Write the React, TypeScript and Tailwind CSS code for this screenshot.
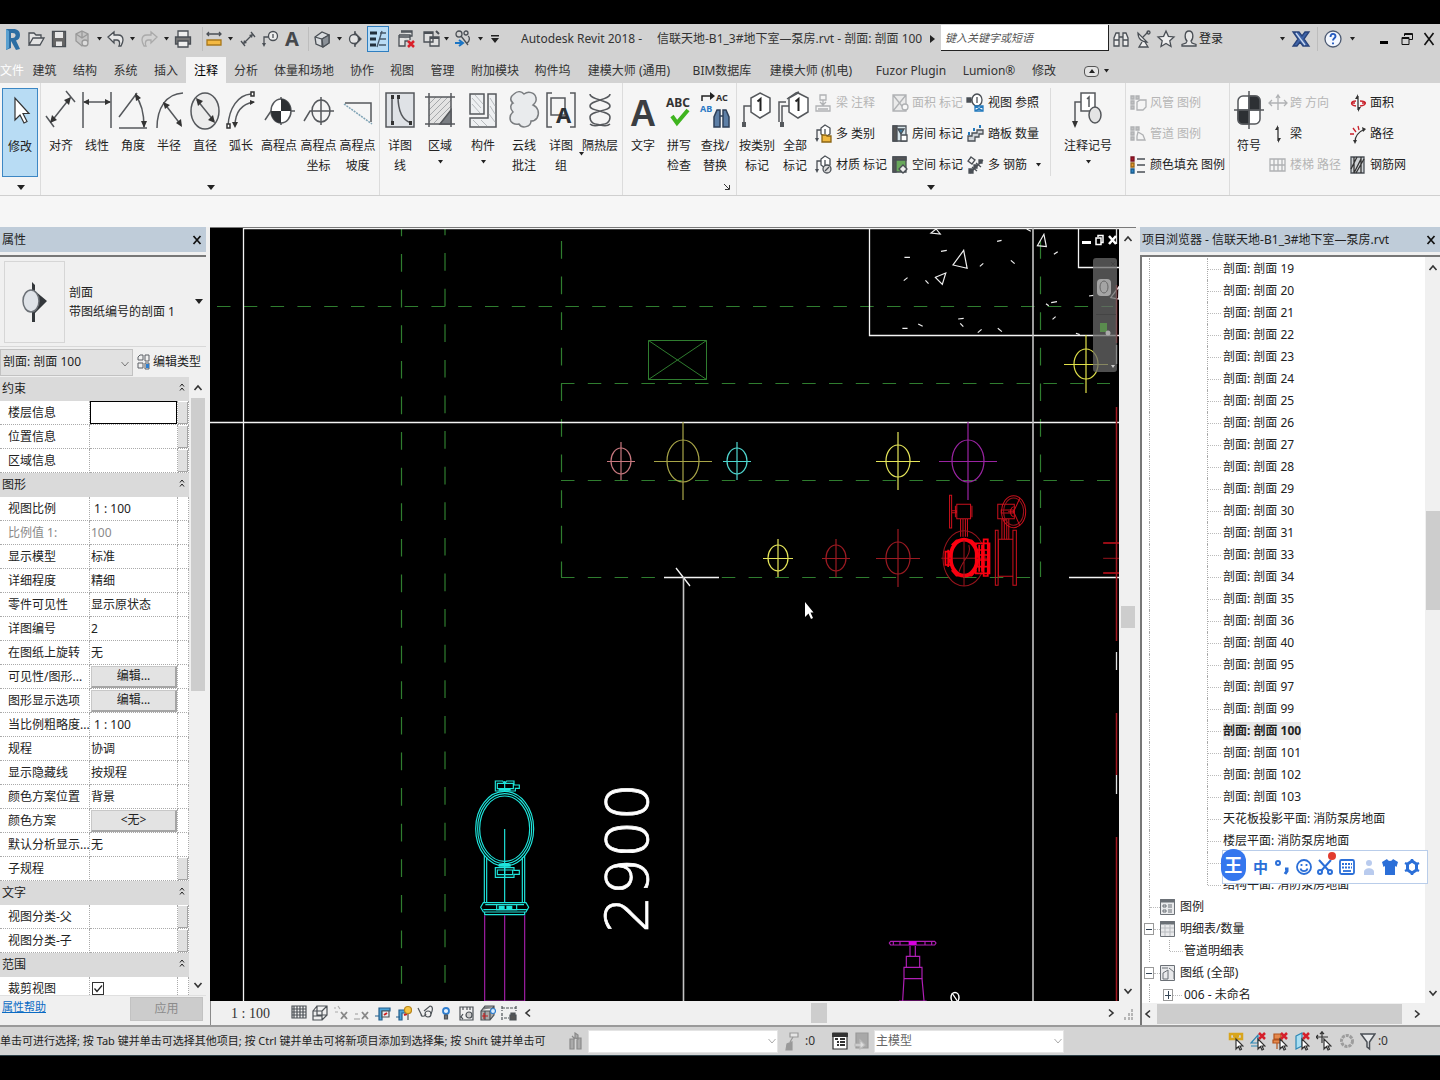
import React from 'react';

type Kids = { children: React.ReactNode };

const FONT = "font-['Noto_Sans','Noto_Sans_CJK_SC',sans-serif]";

/* ---------- icon helpers ---------- */

function Big({ children }: Kids) {
  return (
    <svg viewBox="0 0 36 40" className="h-10 w-9 shrink-0 overflow-visible" fill="none" stroke="#55585c" strokeWidth="1.5" aria-hidden="true">
      {children}
    </svg>
  );
}

function Sm({ children }: Kids) {
  return (
    <svg viewBox="0 0 20 20" className="h-5 w-5 shrink-0" fill="none" stroke="#4a4f55" strokeWidth="1.3" aria-hidden="true">
      {children}
    </svg>
  );
}

function Down({ className = '' }: { className?: string }) {
  return (
    <svg viewBox="0 0 8 5" className={`h-[5px] w-2 shrink-0 ${className}`} aria-hidden="true">
      <path d="M0 0h8L4 5z" fill="#222" />
    </svg>
  );
}

function Tiny() {
  return (
    <svg viewBox="0 0 6 4" className="h-1 w-1.5 shrink-0" aria-hidden="true">
      <path d="M1 0h5L3.500 3.500z" fill="#222" />
    </svg>
  );
}

function Chevron({ dir }: { dir: 'up' | 'down' | 'left' | 'right' }) {
  const d = {
    up: 'M1.500 7L5 3l3.500 4',
    down: 'M1.500 3L5 7l3.500-4',
    left: 'M7 1.500L3 5l4 3.500',
    right: 'M3 1.500L7 5l-4 3.500',
  }[dir];
  return (
    <svg viewBox="0 0 10 10" className="h-2.5 w-2.5 shrink-0" fill="none" stroke="#333" strokeWidth="1.6" aria-hidden="true">
      <path d={d} />
    </svg>
  );
}

/* ---------- title bar ---------- */

function Tool({ w, label, active, children }: Kids & { w: string; label: string; active?: boolean }) {
  return (
    <button
      type="button"
      aria-label={label}
      className={`flex h-[26px] shrink-0 items-center justify-center ${w} ${active ? 'border border-[#2f7ec0] bg-[#b9dcf5]' : ''}`}
    >
      {children}
    </button>
  );
}

function Sep() {
  return <span className="h-6 w-px shrink-0 bg-[#bdbdbd]" />;
}

function TitleBar() {
  return (
    <div className="flex h-[29px] items-center bg-[#d2d2d2]">
      <Tool w="w-[23px]" label="应用程序菜单">
        <svg viewBox="0 0 20 24" className="h-6 w-5" aria-hidden="true">
          <path d="M4 2h7c5 0 7 2.500 7 6 0 3-1.500 5-4 5.500L18 22l-4 1-5-9v7l-5 2z" fill="#2c6ea3" />
          <path d="M9 6h1.500c2 0 3 .8 3 2.200S12.500 11 10.500 11H9z" fill="#d2d2d2" />
          <path d="M4 2l3 2v17l-3 2z" fill="#5aa0d0" />
        </svg>
      </Tool>
      <Tool w="w-[25px]" label="打开">
        <Sm>
          <path d="M3 16V4h5l2 2h5v3M3 16l4-7h11l-4 7z" fill="#e4e4e4" />
        </Sm>
      </Tool>
      <Tool w="w-[22px]" label="保存">
        <Sm>
          <path d="M3.500 2.500h13v15h-13z" fill="#666" />
          <path d="M6 3h8v6H6zM7 12.500h6V17H7z" fill="#e8e8e8" stroke="none" />
        </Sm>
      </Tool>
      <Tool w="w-[24px]" label="同步">
        <Sm>
          <g stroke="#999">
            <path d="M10 2l6 3v7l-6 5-6-5V5z" fill="#c4c4c4" />
            <path d="M10 2v7M4 5l6 4 6-4" />
            <circle cx="13" cy="14" r="3" fill="#ddd" />
          </g>
        </Sm>
      </Tool>
      <Tool w="w-[10px]" label="同步选项"><Tiny /></Tool>
      <Tool w="w-[23px]" label="放弃">
        <Sm>
          <path d="M2 8l6-5v3h4c4 0 5 3 5 5s-1 4-2 6h-2c1-2 1-6-2-6H8v3z" fill="#e8e8e8" />
        </Sm>
      </Tool>
      <Tool w="w-[10px]" label="放弃列表"><Tiny /></Tool>
      <Tool w="w-[23px]" label="重做">
        <Sm>
          <path stroke="#aaa" d="M18 8l-6-5v3H8c-4 0-5 3-5 5s1 4 2 6h2c-1-2-1-6 2-6h3v3z" />
        </Sm>
      </Tool>
      <Tool w="w-[11px]" label="重做列表"><Tiny /></Tool>
      <Tool w="w-[24px]" label="打印">
        <Sm>
          <path d="M5 8V2h10v6" fill="#eee" />
          <path d="M2.500 8h15v7h-15z" fill="#777" />
          <path d="M5 12h10v6H5z" fill="#eee" />
        </Sm>
      </Tool>
      <div className="w-[7px] shrink-0" />
      <Sep />
      <Tool w="w-[21px]" label="测量">
        <Sm>
          <path d="M3 5h14M5 3L3 5l2 2M15 3l2 2-2 2" />
          <path d="M3 11h14v5H3z" fill="#f4b942" stroke="#a9781b" />
        </Sm>
      </Tool>
      <Tool w="w-[12px]" label="测量选项"><Tiny /></Tool>
      <Tool w="w-[23px]" label="对齐尺寸标注">
        <Sm>
          <path d="M6 14L14 6M3 12l4 5M13 3l4 5" />
          <path d="M5 15l1-4 3 3zM15 5l-4 1 3 3z" fill="#4a4f55" stroke="none" />
        </Sm>
      </Tool>
      <Tool w="w-[22px]" label="按类别标记">
        <Sm>
          <circle cx="13" cy="7" r="4.500" fill="#eee" />
          <path d="M8.500 8H4v8M13 5v4" />
          <path d="M2 14h4l-2 4z" fill="#4a4f55" stroke="none" />
        </Sm>
      </Tool>
      <Tool w="w-[22px]" label="文字">
        <span className="text-[20px] leading-6 font-bold text-[#45484c]" aria-hidden="true">A</span>
      </Tool>
      <div className="w-[5px] shrink-0" />
      <Sep />
      <Tool w="w-[26px]" label="默认三维视图">
        <Sm>
          <path d="M3 8l7-5 7 3v8l-6 4-7-3z" fill="#d9dcdf" />
          <path d="M3 8l7 2 7-4M10 10v8" />
          <path d="M10 10l7-4v8l-6 4z" fill="#8a9097" />
        </Sm>
      </Tool>
      <Tool w="w-[8px]" label="三维选项"><Tiny /></Tool>
      <Tool w="w-[24px]" label="剖面">
        <Sm>
          <path d="M10 2v16" />
          <path d="M10 4l6 6-6 6z" fill="#333" />
          <circle cx="9" cy="10" r="4.500" fill="#e4e4e4" />
        </Sm>
      </Tool>
      <Tool w="w-[22px]" label="细线" active>
        <Sm>
          <path d="M2 4h7M2 10h6M2 16h6" strokeWidth="3" stroke="#22303d" />
          <path d="M12 4h6M11 10h7M11 16h7M14 2L9 18" stroke="#46586a" />
        </Sm>
      </Tool>
      <Tool w="w-[34px]" label="关闭隐藏窗口">
        <Sm>
          <path d="M5 2h11v5h-2M3 6h11v5M3 6v11h6v-5h3" fill="#e4e4e4" />
          <path d="M3 8h11M5 3h11" />
          <path d="M12 12l6 6M18 12l-6 6" stroke="#d9202a" strokeWidth="2.500" />
        </Sm>
      </Tool>
      <Tool w="w-[18px]" label="切换窗口">
        <Sm>
          <path d="M2 3h9v10H2zM8 8h9v9H8z" fill="#e0e0e0" />
          <path d="M2 4h9M8 9h9M14 2l3 3" strokeWidth="2" />
        </Sm>
      </Tool>
      <Tool w="w-[10px]" label="切换窗口列表"><Tiny /></Tool>
      <Tool w="w-[24px]" label="用户界面">
        <Sm>
          <circle cx="6" cy="5" r="3" />
          <circle cx="13" cy="4" r="2" />
          <path d="M8 7l7 9M15 7c2 1 2 5-1 7" />
          <path d="M2 14h7M6 11l4 3-4 3" stroke="#1b75c4" strokeWidth="2" />
        </Sm>
      </Tool>
      <Tool w="w-[10px]" label="用户界面列表"><Tiny /></Tool>
      <Tool w="w-[20px]" label="自定义快速访问工具栏">
        <svg viewBox="0 0 8 8" className="h-2 w-2" aria-hidden="true">
          <path d="M0 0h8v1.500H0zM0 3h8L4 8z" fill="#222" />
        </svg>
      </Tool>
      <div className="flex min-w-0 flex-1 items-center overflow-hidden pl-4 text-[12px] whitespace-nowrap text-[#333]">
        <span className="w-[136px] shrink-0">Autodesk Revit 2018 -</span>
        <span className="truncate">信联天地-B1_3#地下室—泵房.rvt - 剖面: 剖面 100</span>
      </div>
      <svg viewBox="0 0 5 8" className="mr-1.5 ml-0.5 h-2 w-[5px] shrink-0" aria-hidden="true">
        <path d="M0 0l5 4-5 4z" fill="#222" />
      </svg>
      <input
        aria-label="搜索"
        placeholder="键入关键字或短语"
        className="mb-0.5 h-[26px] w-[168px] shrink-0 border-r border-b border-[#222] bg-white px-1 text-[11px] italic placeholder:text-[#555]"
      />
      <Tool w="w-[23px]" label="搜索">
        <Sm>
          <path d="M3 17V9l2-5h3v13zM12 17V4h3l2 5v8zM8 8h4M3 11h5M12 11h5" fill="#ececec" />
        </Sm>
      </Tool>
      <Tool w="w-[23px]" label="通讯中心">
        <Sm>
          <path d="M4 4c0 6 4 9 9 9zM9 8l5-5M8 13l-3 5h9l-3-5" fill="#eee" />
          <circle cx="14.500" cy="3.500" r="1.500" />
        </Sm>
      </Tool>
      <Tool w="w-[22px]" label="收藏夹">
        <Sm>
          <path d="M10 2l2.400 5.300 5.600.6-4.200 3.900 1.200 5.700-5-3-5 3 1.200-5.700L2 7.900l5.600-.6z" fill="#eee" />
        </Sm>
      </Tool>
      <button type="button" className="flex w-[98px] shrink-0 items-center pl-0.5 text-[12px]">
        <Sm>
          <path d="M10 2c-5 0-4.500 8-2 10l-1 2-4 1.500V17h14v-1.500L13 14l-1-2c2.500-2 3-10-2-10z" fill="#e6e6e6" />
        </Sm>
        登录
      </button>
      <Tool w="w-[14px]" label="登录选项"><Tiny /></Tool>
      <Tool w="w-[24px]" label="Exchange Apps">
        <Sm>
          <path d="M2 3h6l3 4 3-4h4l-5 7 5 7h-6l-3-4-3 4H2l5-7z" fill="#3f64a8" stroke="#28437a" />
          <path d="M5 4l9 12" stroke="#c9d8f0" />
        </Sm>
      </Tool>
      <div className="w-1 shrink-0" />
      <Sep />
      <Tool w="w-[30px]" label="帮助">
        <Sm>
          <circle cx="10" cy="10" r="8" fill="#f4f8ff" stroke="#4c5a72" />
          <path d="M7.500 8c0-4 5-4 5-.8 0 2-2.500 2-2.500 4.300M10 13.500v1.800" stroke="#245ac0" strokeWidth="1.900" />
        </Sm>
      </Tool>
      <Tool w="w-[8px]" label="帮助选项"><Tiny /></Tool>
      <div className="w-4 shrink-0" />
      <Tool w="w-[24px]" label="最小化">
        <span className="mt-2 h-[3px] w-2 bg-black" />
      </Tool>
      <Tool w="w-[22px]" label="还原">
        <svg viewBox="0 0 12 14" className="h-3.5 w-3" fill="none" stroke="#111" aria-hidden="true">
          <path d="M3.500 4V1.500h8v6H8M1 5.500h7v7H1zM1 6.500h7M4 2.500h7" />
        </svg>
      </Tool>
      <Tool w="w-[22px]" label="关闭">
        <svg viewBox="0 0 12 14" className="h-3.5 w-3" fill="none" stroke="#111" strokeWidth="1.6" aria-hidden="true">
          <path d="M1.500 1l9 12M10.500 1l-9 12" />
        </svg>
      </Tool>
    </div>
  );
}

/* ---------- ribbon tabs ---------- */

const tabs: [string, string][] = [
  ['文件', 'w-6'],
  ['建筑', 'w-[41px]'],
  ['结构', 'w-10'],
  ['系统', 'w-[41px]'],
  ['插入', 'w-10'],
  ['注释', 'w-10'],
  ['分析', 'w-10'],
  ['体量和场地', 'w-[76px]'],
  ['协作', 'w-10'],
  ['视图', 'w-10'],
  ['管理', 'w-[41px]'],
  ['附加模块', 'w-16'],
  ['构件坞', 'w-[51px]'],
  ['建模大师 (通用)', 'w-[102px]'],
  ['BIM数据库', 'w-[84px]'],
  ['建模大师 (机电)', 'w-[94px]'],
  ['Fuzor Plugin', 'w-[106px]'],
  ['Lumion®', 'w-[50px]'],
  ['修改', 'w-[60px]'],
];

function Tabs() {
  return (
    <nav className="flex h-[30px] items-end bg-[#d2d2d2] text-[12px]">
      {tabs.map(([t, w], i) => (
        <button
          type="button"
          key={t}
          className={`flex h-[26px] shrink-0 items-center justify-center pt-0.5 whitespace-nowrap ${w} ${
            i === 0 ? 'text-white' : t === '注释' ? 'bg-[#f5f5f5] text-black' : 'text-[#333]'
          }`}
        >
          {t}
        </button>
      ))}
      <button type="button" aria-label="最小化功能区" className="ml-2.5 flex h-[26px] items-center gap-1 pt-0.5">
        <span className="flex h-[11px] w-[15px] items-center justify-center rounded-sm border border-[#555] bg-[#e4e4e4]">
          <svg viewBox="0 0 6 4" className="h-1 w-1.5" aria-hidden="true"><path d="M0 4h6L3 0z" fill="#222" /></svg>
        </span>
        <Tiny />
      </button>
    </nav>
  );
}

/* ---------- ribbon ---------- */

function Btn({ w, lines, icon, arrow, side }: { w: string; lines: string[]; icon: React.ReactNode; arrow?: boolean; side?: boolean }) {
  return (
    <button type="button" className={`relative flex h-[88px] shrink-0 flex-col items-center pt-0.5 text-[12px] leading-5 whitespace-nowrap text-[#222] ${w}`}>
      {icon}
      <span className="mt-1.5">{lines[0]}</span>
      {lines[1] ? <span>{lines[1]}</span> : null}
      {arrow ? <span className="mt-1"><Tiny /></span> : null}
      {side ? <span className="absolute top-16 -right-1 flex"><Tiny /></span> : null}
    </button>
  );
}

function Row({ icon, text, off, arrow }: { icon: React.ReactNode; text: string; off?: boolean; arrow?: boolean }) {
  return (
    <button type="button" disabled={off} className={`flex h-[31px] items-center gap-0.5 text-[12px] whitespace-nowrap ${off ? 'text-[#b5b5b5]' : 'text-[#222]'}`}>
      <span className={`flex ${off ? 'opacity-40' : ''}`}>{icon}</span>
      <span>{text}</span>
      {arrow ? <span className="ml-1.5"><Tiny /></span> : null}
    </button>
  );
}

function Group({ w, foot, launcher, children, last, pad = '' }: Kids & { w: string; foot?: boolean; launcher?: boolean; last?: boolean; pad?: string }) {
  return (
    <section className={`flex shrink-0 flex-col pt-[5px] ${w} ${pad} ${last ? '' : 'border-r border-[#dcdcdc]'}`}>
      <div className="flex h-[93px]">{children}</div>
      <div className="flex h-3 items-center justify-center">
        {foot ? <Down /> : null}
        {launcher ? (
          <svg viewBox="0 0 6 6" className="mr-1.5 ml-auto h-1.5 w-1.5" fill="none" stroke="#333" aria-hidden="true">
            <path d="M0 0l5 5M5.500 1v4.500H1" />
          </svg>
        ) : null}
      </div>
    </section>
  );
}

const tagHex = (
  <>
    <path d="M21 3l10 5v14l-10 6-9-6V8z" fill="#fff" />
    <path d="M12 16H5v19" />
    <path d="M3 32h4v5H3z" fill="#55585c" stroke="none" />
    <path d="M18.500 11.500l3-2.500v12" stroke="#222" strokeWidth="2" />
  </>
);

const ic = {
  modify: (
    <Big>
      <path d="M13 7v22l5-5 4 8 3-1.500-4-8h6z" fill="#fff" stroke="#333" strokeWidth="1.200" />
    </Big>
  ),
  aligned: (
    <Big>
      <path d="M8 32L27 8M3 26l8 11M23 1l9 11" />
      <path d="M7 33l2-8 5 5zM28 7l-7 3 5 5z" fill="#333" stroke="none" />
    </Big>
  ),
  linear: (
    <Big>
      <path d="M4 2v36M32 2v36M5 12h26" />
      <path d="M4 12l6-3v6zM32 12l-6-3v6z" fill="#333" stroke="none" />
    </Big>
  ),
  angular: (
    <Big>
      <path d="M4 27L22 3M4 38h28M20 5c6 7 9 20 9 32" />
      <path d="M20 3l6 5-5 3zM29 38l-3-7h6z" fill="#333" stroke="none" />
    </Big>
  ),
  radius: (
    <Big>
      <path d="M6 38C6 18 15 4 32 3M13 13l17 22" />
      <path d="M12 12l7 3-5 4zM31 37l-6-4 5-4z" fill="#333" stroke="none" />
    </Big>
  ),
  diameter: (
    <Big>
      <ellipse cx="18" cy="21" rx="14" ry="18" fill="#ececec" />
      <path d="M10 10l17 21" />
      <path d="M9 8l7 3-5 5zM28 33l-7-3 5-5z" fill="#333" stroke="none" />
    </Big>
  ),
  arc: (
    <Big>
      <path d="M5 36C6 18 15 5 28 4M12 36c0-14 7-22 19-24" />
      <path d="M4 34h3v4H4zM28 2h3v4h-3z" fill="#fff" stroke="#333" />
      <path d="M12 38l-3-6h6zM32 12l-5-2v5z" fill="#333" stroke="none" />
    </Big>
  ),
  spot: (
    <Big>
      <path d="M4 30l6-9h24M20 7v28" />
      <ellipse cx="20" cy="21" rx="10" ry="12" fill="#fff" />
      <path d="M20 9a10 12 0 0 0-10 12h10zM20 33a10 12 0 0 0 10-12H20z" fill="#2d3034" stroke="none" transform="matrix(-1 0 0 1 40 0)" />
    </Big>
  ),
  spotCoord: (
    <Big>
      <ellipse cx="20" cy="21" rx="9" ry="11" />
      <path d="M3 31l6-10h24M20 7v28" />
    </Big>
  ),
  slope: (
    <Big>
      <path d="M5 13h26v19" />
      <path d="M4 14l28 20" stroke="#7fa3b5" strokeDasharray="2 1" />
    </Big>
  ),
  detailLine: (
    <Big>
      <path d="M4 3h28v34H4z" fill="#dfe2e6" />
      <path d="M10 6v28M16 6c0 14 4 24 13 27" />
      <path d="M9 5h3v4H9zM9 31h3v4H9zM15 5h3v4h-3zM27 31h3v4h-3z" fill="#333" stroke="none" />
    </Big>
  ),
  region: (
    <Big>
      <path d="M7 7h22v26H7z" fill="#e3e3e3" stroke="none" />
      <path d="M7 14l7-7M7 20L20 7M7 26L26 7M7 32L29 10M12 33l17-17M18 33l11-11M24 33l5-5" stroke="#a5a8ab" strokeWidth="1" />
      <path d="M3 7h30M3 34h30M7 3v34M29 3v34" />
      <path d="M18 34l11-14v14z" fill="#7b7f84" />
    </Big>
  ),
  component: (
    <Big>
      <path d="M5 4h14v20H5zM23 4h8v33H5V28h18z" fill="#eef0f2" />
      <path d="M7 8l9 10M7 14l8 9M10 5l8 9M25 8l5 8M25 16l5 8M24 24l6 8M8 30l6 6M16 30l6 6" stroke="#b6babd" strokeWidth="1" />
    </Big>
  ),
  cloud: (
    <Big>
      <path d="M8 4c4-4 8-2 10 0 4-3 11-2 12 4 1 4-2 6-3 7 5 2 7 8 4 13-2 3-5 3-6 3 0 6-9 8-12 3-4 1-9-1-9-6 0-4 2-5 3-6-4-4-2-8 0-9C3 10 5 6 8 4z" fill="#e9ebed" stroke="#7a7d80" />
    </Big>
  ),
  detailGroup: (
    <Big>
      <path d="M9 3H4v34h5M27 3h5v34h-5M8 8h14v17H8z" />
      <text x="13" y="33" fontSize="22" fontWeight="700" fill="#2d3034" stroke="none">A</text>
    </Big>
  ),
  insulation: (
    <Big>
      <path d="M8 4c0 6 20 6 20 12S8 20 8 27s6 7 10 8c4 1 8 1 10-1M28 4c0 6-20 6-20 12s20 4 20 11-6 7-10 8c-4 1-8 1-10-1" />
    </Big>
  ),
  text: (
    <Big>
      <text x="5" y="36" fontSize="36" fontWeight="700" fill="#3b3e42" stroke="none" fontFamily="Liberation Sans Narrow, Liberation Sans, sans-serif">A</text>
    </Big>
  ),
  spell: (
    <Big>
      <text x="5" y="17" fontSize="12" fontWeight="700" fill="#333" stroke="none">ABC</text>
      <path d="M11 26l5 7 11-13" stroke="#3fb41f" strokeWidth="4" />
    </Big>
  ),
  find: (
    <Big>
      <path d="M5 11V6h10" stroke="#222" />
      <path d="M13 2l5 4-5 4z" fill="#222" stroke="none" />
      <text x="19" y="11" fontSize="9" fontWeight="700" fill="#333" stroke="none">AC</text>
      <text x="3" y="22" fontSize="9" fontWeight="700" fill="#2a7ac6" stroke="none">AB</text>
      <path d="M17 37V27l3-7h3v17zM26 37V20h3l3 7v10zM23 26h3" fill="#5d7fa6" stroke="#2e4059" />
    </Big>
  ),
  tag: <Big>{tagHex}</Big>,
  tagAll: (
    <Big>
      <path d="M10 9l9-6 3-1M9 12H2v20" />
      <g>{tagHex}</g>
    </Big>
  ),
  keynote: (
    <Big>
      <path d="M11 3h14v18H11z" fill="#fff" />
      <path d="M11 12H5v24M17 9l2-2v10" />
      <path d="M2 31h6l-3 7z" fill="#333" stroke="none" />
      <ellipse cx="25" cy="25" rx="6" ry="8" fill="#e4e4e4" />
    </Big>
  ),
  symbol: (
    <Big>
      <rect x="7" y="6" width="22" height="28" rx="5" fill="#fff" />
      <path d="M18 6h6c3 0 5 2 5 5v9H18zM18 34h-6c-3 0-5-2-5-5v-9h11z" fill="#2d3034" />
      <path d="M18 1v38M3 20h30" />
    </Big>
  ),
};

const tagSm = (
  <>
    <path d="M11 1l5 3v6l-5 3-4-3V4z" fill="#fff" />
    <path d="M7 6H3v10M11 5v5" />
    <path d="M1 14h4l-2 4z" fill="#4a4f55" stroke="none" />
  </>
);

function ElevArrow({ red }: { red?: boolean }) {
  return (
    <Sm>
      <path d="M10 3v14" stroke="#333" />
      <path d="M10 1L7 6h3zM10 19l3-5h-3z" fill="#333" stroke="none" />
      {red ? <path d="M8 13C2 12 2 8 8 8M12 8c7 0 7 4 0 5M4 10h3M14 10h4" stroke="#c8202a" /> : null}
    </Sm>
  );
}

function Ribbon() {
  return (
    <div className="flex h-[113px] border-b border-[#cfcfcf] bg-[#f5f5f5]">
      <Group w="w-[41px]" foot pad="pl-0.5">
        <div className="h-[89px] w-9 border border-[#3c87c4] bg-[#b8dcf4]">
          <Btn w="w-[34px]" lines={['修改']} icon={ic.modify} />
        </div>
      </Group>
      <Group w="w-[339px]" foot pad="pl-0.5">
        <Btn w="w-9" lines={['对齐']} icon={ic.aligned} />
        <Btn w="w-9" lines={['线性']} icon={ic.linear} />
        <Btn w="w-9" lines={['角度']} icon={ic.angular} />
        <Btn w="w-9" lines={['半径']} icon={ic.radius} />
        <Btn w="w-9" lines={['直径']} icon={ic.diameter} />
        <Btn w="w-9" lines={['弧长']} icon={ic.arc} />
        <Btn w="w-10" lines={['高程点']} icon={ic.spot} />
        <Btn w="w-[39px]" lines={['高程点', '坐标']} icon={ic.spotCoord} />
        <Btn w="w-[39px]" lines={['高程点', '坡度']} icon={ic.slope} />
      </Group>
      <Group w="w-[243px]">
        <Btn w="w-10" lines={['详图', '线']} icon={ic.detailLine} />
        <Btn w="w-10" lines={['区域']} icon={ic.region} arrow />
        <Btn w="w-[46px]" lines={['构件']} icon={ic.component} arrow />
        <Btn w="w-9" lines={['云线', '批注']} icon={ic.cloud} />
        <Btn w="w-[38px]" lines={['详图', '组']} icon={ic.detailGroup} side />
        <Btn w="w-10" lines={['隔热层']} icon={ic.insulation} />
      </Group>
      <Group w="w-[114px]" launcher pad="pl-0.5">
        <Btn w="w-9" lines={['文字']} icon={ic.text} />
        <Btn w="w-9" lines={['拼写', '检查']} icon={ic.spell} />
        <Btn w="w-9" lines={['查找/', '替换']} icon={ic.find} />
      </Group>
      <Group w="w-[389px]" foot>
        <Btn w="w-10" lines={['按类别', '标记']} icon={ic.tag} />
        <Btn w="w-9" lines={['全部', '标记']} icon={ic.tagAll} />
        <div className="-mt-px ml-px w-[76px]">
          <Row off text="梁 注释" icon={<Sm><path d="M6 2h6v5H6zM9 7v5M6 9l3 3 3-3M2 13h14v5H2zM4 16h10" /></Sm>} />
          <Row text="多 类别" icon={<Sm>{tagSm}<path d="M8 11h4l1 1h4v6H8z" fill="#f0b83f" stroke="#8a6414" /></Sm>} />
          <Row text="材质 标记" icon={<Sm>{tagSm}<circle cx="13" cy="14" r="4" fill="#ddd" /><path d="M11 16l4-4" /></Sm>} />
        </div>
        <div className="-mt-px w-[76px]">
          <Row off text="面积 标记" icon={<Sm><path d="M3 2h13v16H3zM3 2l13 16M16 2L3 18" fill="#ddd" /><circle cx="15" cy="14" r="3" fill="#fff" /></Sm>} />
          <Row text="房间 标记" icon={<Sm><path d="M3 2h13v15H3z" fill="#d6e4ea" /><path d="M3 2h4v15H3z" fill="#555" /><path d="M8 5h6l-3 5z" fill="#3a7ba0" /><path d="M11 11h6v6h-6z" fill="#fff" /></Sm>} />
          <Row text="空间 标记" icon={<Sm><path d="M3 2h13v15H3z" fill="#69a85c" /><path d="M3 2h3v15H3zM3 2h13v3H3z" fill="#555" /><path d="M13 10l4 4-4 4-4-4z" fill="#eee" /></Sm>} />
        </div>
        <div className="-mt-px w-[82px]">
          <Row text="视图 参照" icon={<Sm><ellipse cx="11" cy="7" rx="5" ry="6" fill="#fff" /><path d="M1 7h5M11 4v6" /><path d="M1 5h4v4H1z" fill="#4a4f55" /><path d="M9 13h8v5H9zM9 13l8 5M17 13l-8 5" stroke="#2279bd" /></Sm>} />
          <Row text="踏板 数量" icon={<Sm><path d="M2 17v-5h4V9h5V6h6v4h-4v3H9v4z" fill="#d0d4d8" /><path d="M3 8v3M8 4v3M14 1v3" stroke="#2279bd" strokeWidth="2" /></Sm>} />
          <Row text="多 钢筋" arrow icon={<Sm><path d="M5 2l4 3-3 4-4-3zM4 18L17 5M6 12l5 4M10 8l5 4" /><path d="M3 14h4v4H3zM8 10h3v3H8zM13 5h3v3h-3z" fill="#4a4f55" /></Sm>} />
        </div>
        <span className="ml-0.5 h-[88px] w-px bg-[#dcdcdc]" />
        <div className="flex flex-1 justify-center">
          <Btn w="w-[52px]" lines={['注释记号']} icon={ic.keynote} arrow />
        </div>
      </Group>
      <Group w="w-[104px]" pad="pl-0.5">
        <div className="-mt-px">
          <Row off text="风管 图例" icon={<Sm><path d="M3 3h3v3H3zM8 3h3v3H8zM3 8h3v3H3zM3 13h3v3H3z" fill="#777" /><path d="M9 9l3-2h6v7l-3 3H9z" /></Sm>} />
          <Row off text="管道 图例" icon={<Sm><path d="M3 3h3v3H3zM8 3h3v3H8zM3 8h3v3H3zM3 13h3v3H3z" fill="#777" /><path d="M10 8l5 3 2 5H9v-4z" /></Sm>} />
          <Row
            text="颜色填充 图例"
            icon={<Sm><path d="M3 2h3v4H3z" fill="#a3182a" stroke="#7a1020" /><path d="M3 8h3v4H3z" fill="#e79a2e" stroke="#9b6414" /><path d="M3 14h3v4H3z" fill="#2c87c8" stroke="#1a5a8a" /><path d="M9 4h8M9 10h8M9 17h8" /></Sm>}
          />
        </div>
      </Group>
      <Group w="flex-1" last>
        <Btn w="w-[38px]" lines={['符号']} icon={ic.symbol} />
        <div className="-mt-px w-20">
          <Row off text="跨 方向" icon={<Sm><path d="M10 3v14M1 10h18M4 7l-3 3 3 3M16 7l3 3-3 3M8 5l2-3 2 3" /></Sm>} />
          <Row text="梁" icon={<ElevArrow />} />
          <Row off text="楼梯 路径" icon={<Sm><path d="M2 4h15v12H2zM6 4v12M10 4v12M14 4v12M2 10h15" /></Sm>} />
        </div>
        <div className="-mt-px">
          <Row text="面积" icon={<ElevArrow red />} />
          <Row text="路径" icon={<Sm><path d="M7 18c0-6 3-10 10-13" stroke="#333" /><path d="M5 16l2 4 2-4zM14 3l4 2-3 3z" fill="#333" stroke="none" /><path d="M2 10h4M5 4l3 4M10 2l1 4" stroke="#c8202a" /></Sm>} />
          <Row text="钢筋网" icon={<Sm><path d="M3 2h13v16H3z" fill="#cfd3d6" /><path d="M6 2v16M13 2v16M6 18L13 4M8 18l8-14M3 14L9 2" stroke="#333" /></Sm>} />
        </div>
      </Group>
    </div>
  );
}

/* ---------- properties palette ---------- */

type Prop = { k: string; v?: string; kind?: 'head' | 'btn' | 'more' | 'edit' | 'check' | 'off' };

const props: Prop[] = [
  { k: '约束', kind: 'head' },
  { k: '楼层信息', kind: 'edit' },
  { k: '位置信息', kind: 'more' },
  { k: '区域信息', kind: 'more' },
  { k: '图形', kind: 'head' },
  { k: '视图比例', v: '1 : 100' },
  { k: '比例值 1:', v: '100', kind: 'off' },
  { k: '显示模型', v: '标准' },
  { k: '详细程度', v: '精细' },
  { k: '零件可见性', v: '显示原状态' },
  { k: '详图编号', v: '2' },
  { k: '在图纸上旋转', v: '无' },
  { k: '可见性/图形...', v: '编辑...', kind: 'btn' },
  { k: '图形显示选项', v: '编辑...', kind: 'btn' },
  { k: '当比例粗略度...', v: '1 : 100' },
  { k: '规程', v: '协调' },
  { k: '显示隐藏线', v: '按规程' },
  { k: '颜色方案位置', v: '背景' },
  { k: '颜色方案', v: '<无>', kind: 'btn' },
  { k: '默认分析显示...', v: '无' },
  { k: '子规程', kind: 'more' },
  { k: '文字', kind: 'head' },
  { k: '视图分类-父', kind: 'more' },
  { k: '视图分类-子', kind: 'more' },
  { k: '范围', kind: 'head' },
  { k: '裁剪视图', kind: 'check' },
];

function PaletteTitle({ text }: { text: string }) {
  return (
    <div className="flex h-[25px] shrink-0 items-center justify-between bg-[#bfccd9] px-0.5 text-[12px] text-[#222]">
      <span className="truncate">{text}</span>
      <button type="button" aria-label="关闭面板" className="mr-0.5 flex shrink-0">
        <svg viewBox="0 0 10 10" className="h-2.5 w-2.5" stroke="#111" strokeWidth="1.700" aria-hidden="true">
          <path d="M1.500 1l7 8M8.500 1l-7 8" />
        </svg>
      </button>
    </div>
  );
}

function PropRow({ k, v, kind }: Prop) {
  if (kind === 'head') {
    return (
      <tr className="h-6 bg-[#dadada]">
        <th colSpan={3} scope="colgroup" className="pl-0.5 text-left font-normal">
          <div className="flex items-center justify-between pr-1">
            {k}
            <svg viewBox="0 0 6 8" className="mb-1 h-2 w-1.5" fill="none" stroke="#222" aria-hidden="true">
              <path d="M1 3.500L3 1l2 2.500M1 7.500L3 5l2 2.500" />
            </svg>
          </div>
        </th>
      </tr>
    );
  }
  const cell = 'border-b border-dotted border-[#aaa] p-0';
  return (
    <tr className={`h-6 ${kind === 'off' ? 'text-[#8a8a8a]' : 'text-[#222]'}`}>
      <th scope="row" className={`${cell} border-r pl-2 text-left font-normal`}>{k}</th>
      <td className={`${cell} border-r`}>
        {kind === 'btn' ? (
          <button type="button" className="ml-px h-[22px] w-[86px] border border-r-2 border-b-2 border-[#c8c8c8] border-r-[#a5a5a5] border-b-[#a5a5a5] bg-[#e3e3e3] leading-[18px]">{v}</button>
        ) : kind === 'edit' ? (
          <input aria-label={k} className="block h-[23px] w-[87px] border border-black px-1" />
        ) : kind === 'check' ? (
          <label className="flex pl-0.5">
            <input type="checkbox" defaultChecked aria-label={k} className="h-[13px] w-3 appearance-none border border-[#333] bg-white" />
            <svg viewBox="0 0 12 13" className="-ml-3 h-[13px] w-3" fill="none" stroke="#222" strokeWidth="1.300" aria-hidden="true">
              <path d="M2.500 6.500L5 9.500l5-6" />
            </svg>
          </label>
        ) : (
          <span className={v === '1 : 100' ? 'pl-1' : 'pl-px'}>{v}</span>
        )}
      </td>
      <td className={`${cell} border-r`}>
        {kind === 'more' || kind === 'edit' ? (
          <button type="button" aria-label={`${k} 更多`} className="block h-[22px] w-full border-r border-b border-[#a5a5a5] bg-[#e0e0e0]" />
        ) : null}
      </td>
    </tr>
  );
}

function VScroll({ top, thumb, bottom, w }: { top: string; thumb: string; bottom: string; w: string }) {
  return (
    <div className={`flex shrink-0 flex-col items-center bg-[#f0f0f0] ${w}`}>
      <button type="button" aria-label="向上滚动" className="flex h-[21px] shrink-0 items-center"><Chevron dir="up" /></button>
      <div className={top} />
      <div className={`w-[14px] shrink-0 bg-[#cdcdcd] ${thumb}`} />
      <div className={bottom} />
      <button type="button" aria-label="向下滚动" className="flex h-[21px] shrink-0 items-center"><Chevron dir="down" /></button>
    </div>
  );
}

function Properties() {
  return (
    <aside className="flex w-[206px] shrink-0 flex-col bg-[#f0f0f0] text-[12px]">
      <PaletteTitle text="属性" />
      <div className="mt-[3px] flex h-[92px] shrink-0 items-center border-t-2 border-b border-t-[#777] border-b-[#d8d8d8] pl-1">
        <div className="flex h-[82px] w-[61px] items-center justify-center border border-[#d6d6d6]">
          <svg viewBox="0 0 26 40" className="h-10 w-[26px]" aria-hidden="true">
            <path d="M10 0v40h3v-9l12-12L13 9V3z" fill="#33373b" />
            <ellipse cx="9" cy="19" rx="8" ry="11" fill="#dfe3e8" stroke="#6c7177" strokeWidth="1.500" />
          </svg>
        </div>
        <div className="flex flex-1 items-center justify-between pr-[3px] pl-1 leading-[19px]">
          <div className="text-[#222]">剖面<br />带图纸编号的剖面 1</div>
          <Down />
        </div>
      </div>
      <div className="flex h-[30px] shrink-0 items-center">
        <div className="relative">
          <select aria-label="视图" className="block h-[27px] w-[133px] appearance-none border border-[#c2c2c2] bg-[#e1e1e1] pl-0.5 text-[#222]">
            <option>剖面: 剖面 100</option>
          </select>
          <svg viewBox="0 0 8 6" className="absolute top-3 right-1 h-1.5 w-2" fill="none" stroke="#777" aria-hidden="true"><path d="M.5 1L4 5l3.500-4" /></svg>
        </div>
        <button type="button" className="ml-1 flex items-center gap-0.5 whitespace-nowrap text-[#222]">
          <svg viewBox="0 0 14 16" className="h-4 w-3.5" fill="none" stroke="#5a5f64" aria-hidden="true">
            <path d="M1 3l2-2h3v5H1zM8 1h4v6H8zM1 9h5v5H1zM8 9h4v6H8z" />
            <path d="M9 10h3v4H9z" fill="#2f7fd0" stroke="none" />
          </svg>
          编辑类型
        </button>
      </div>
      <div className="flex min-h-0 flex-1 overflow-hidden">
        <div className="min-h-0 flex-1 overflow-hidden bg-white">
          <table className="w-full table-fixed border-separate border-spacing-0 whitespace-nowrap">
            <colgroup><col className="w-[90px]" /><col className="w-[88px]" /><col className="w-[11px]" /></colgroup>
            <tbody>
              {props.map((p) => <PropRow key={p.k} {...p} />)}
            </tbody>
          </table>
        </div>
        <VScroll w="w-[17px]" top="h-0" thumb="h-[293px]" bottom="flex-1" />
      </div>
      <div className="flex h-[30px] shrink-0 items-start justify-between border-t border-[#e0e0e0] pt-px pr-[3px]">
        <a href="#help" className="pt-0.5 pl-0.5 text-[11px] text-[#0a6bc4] underline">属性帮助</a>
        <button type="button" disabled className="h-6 w-[73px] border border-[#c2c2c2] bg-[#cccccc] text-[#8b8b8b]">应用</button>
      </div>
    </aside>
  );
}

/* ---------- drawing view ---------- */

type Mark = { x: number; y: number; rx: number; ry: number; h: number; v: number; c: string };
const marks: Mark[] = [
  { x: 621, y: 461, rx: 10, ry: 13, h: 14, v: 19, c: '#c8787f' },
  { x: 683, y: 461, rx: 16, ry: 21, h: 29, v: 39, c: '#a8a548' },
  { x: 737, y: 461, rx: 10, ry: 13, h: 14, v: 19, c: '#4fd6cf' },
  { x: 898, y: 461, rx: 12, ry: 16, h: 22, v: 29, c: '#e6e65a' },
  { x: 968, y: 461, rx: 16, ry: 21, h: 29, v: 39, c: '#9a24a2' },
  { x: 778, y: 558, rx: 10, ry: 13, h: 15, v: 19, c: '#e6e65a' },
  { x: 836, y: 558, rx: 10, ry: 13, h: 14, v: 19, c: '#9c1a22' },
  { x: 898, y: 558, rx: 12, ry: 16, h: 22, v: 29, c: '#9c1a22' },
  { x: 1086, y: 364, rx: 12, ry: 15, h: 22, v: 29, c: '#e0e04a' },
];

function Drawing() {
  return (
    <svg viewBox="210 228 909 774" preserveAspectRatio="xMinYMin slice" className="absolute inset-0 h-full w-full" fill="none" role="img" aria-label="剖面 100">
      <g stroke="#2f7d2f" strokeDasharray="13.500 13.300">
        <path d="M217 306.500H1113M561 383.500H1110M561 480.500H1110M561 577.500H1040" />
      </g>
      <g stroke="#2f7d2f" strokeDasharray="17.700 17.900" strokeWidth="1.200">
        <path d="M401.500 218.500V1001M445 217.500V1001M561.500 241V577M1040.500 241V577" />
      </g>
      <path d="M648.500 340.500h58v39h-58zM648.500 340.500l58 39M706.500 340.500l-58 39" stroke="#2f7d2f" />
      <path d="M243.500 1001V228.500H1119M869.500 228V335.500H1119M210 422.500H1119M1078.500 228V267.500H1119M664 577.500h55M1069 577.500h50M676 568l14 18" stroke="#f4f4f4" strokeWidth="1.300" />
      <path d="M1033 228V1001M683.500 577V1001" stroke="#c4c4c4" strokeWidth="1.600" />
      <g transform="translate(590 225) scale(.3444 .3333)" stroke="#eee" strokeWidth="3.500">
        <path d="M913 97h16M1019 79l17-3M1182 49l13-3M1268 12l12 7M911 167l11-9M974 166l9 10M1132 124l10-9M1222 106l11 10M1347 88l11-8M1449 213l13-2M1324 236l8 6M1339 233l17-3M1343 283l9-8M907 310h15M953 297l13 7M1069 282l16-2M1075 295l9 10M1126 323l11-10M1184 310l12 10M1411 325l11 4" />
        <path d="M1085 76l-31 44 41 10zM1003 157l30-13-10 34zM1005 12l-15 12 27 3zM1318 28l-19 34 26 3zM1536 185l-24 33 23 4z" />
      </g>
      {marks.map((m) => (
        <g key={`${m.x}-${m.y}`} stroke={m.c} strokeWidth="1.200">
          <ellipse cx={m.x} cy={m.y} rx={m.rx} ry={m.ry} />
          <path d={`M${m.x - m.h} ${m.y + 0.5}h${m.h * 2}M${m.x} ${m.y - m.v}v${m.v * 2}`} />
        </g>
      ))}
      {/* gate valves */}
      <g transform="translate(590 225) scale(.3444 .3333)" stroke="#c8101c" strokeWidth="3">
        <path d="M1044 811h6v98h-6zM1050 857h12v6h-12zM1065 838h40v43h-40zM1061 842v35M1109 842v35M1076 881v54M1083 881v54M1090 881v54M1096 881v54" />
        <ellipse cx="1086" cy="1000" rx="61" ry="83" stroke="#96141c" />
        <ellipse cx="1086" cy="998" rx="39" ry="54" stroke="#fb0010" strokeWidth="11" />
        <path d="M1050 960l14-14h44l14 14M1050 1036l14 16h44l14-16" stroke="#fb0010" strokeWidth="5" />
        <path d="M1086 945v138M1020 1000h140M1100 960c10 30-20 45-28 80" stroke="#96141c" />
        <path d="M1032 980h18v40h-18zM1040 974v52M1120 955h40v90h-40zM1143 943h12v110h-12zM1120 975h40M1120 990h40M1120 1005h40M1120 1025h40M1130 960v80M1138 960v80" stroke="#fb0010" strokeWidth="5" />
        <path d="M1184 838h48v43h-48zM1196 881v62M1203 881v62M1210 881v62M1216 881v62M1194 855h36v9h-36z" />
        <ellipse cx="1230" cy="860" rx="35" ry="48" />
        <ellipse cx="1230" cy="860" rx="29" ry="41" stroke="#96141c" />
        <path d="M1230 860l18-40M1230 860l18 42M1214 860h20M1230 845c-12 4-12 26 0 30" />
        <path d="M1177 916h8v165h-8zM1228 916h10v165h-10zM1186 943h42v111h-42z" />
        <path d="M1490 954h46M1490 1044h46" strokeWidth="5" />
        <path d="M1490 1000h46" stroke="#96141c" />
      </g>
      <path d="M1116.500 285v58M1116.500 407v234M1116.500 713v62M1116.500 837v165" stroke="#a01820" strokeWidth="1.500" />
      <path d="M1116.500 228v16M1116.500 345v19M1116.500 652v18M1116.500 775v19" stroke="#ddd" strokeWidth="1.300" />
      {/* clamped pipe */}
      <g transform="translate(210 740) scale(.33333)" stroke="#1fe5dc" strokeWidth="3.500">
        <ellipse cx="884" cy="266" rx="87" ry="112" />
        <ellipse cx="884" cy="266" rx="81" ry="105" />
        <ellipse cx="884" cy="266" rx="75" ry="98" />
        <path d="M856 123h22l6 8 6-8h22v12h16v10h-12v8h-60zM862 130h48v16h-48zM856 383h56v8h16v12h-16v9h-56zM862 390h46v14h-46zM884 123v30M884 383v29" />
        <path d="M866 148h36M866 376h36" strokeWidth="8" />
        <path d="M884 267v220M823 345v143M830 352v136M937 352v136M944 345v143" />
        <path d="M820 488h128l8 14-8 14H820l-8-14zM824 516v8h120v-8M826 494h116M820 509h130M860 494h60v16h-60z" />
        <path d="M866 502h46" strokeWidth="10" strokeDasharray="18 5" />
        <path d="M824 526v257h120V526M884 526v257" stroke="#a11fa6" />
      </g>
      {/* stem valve */}
      <g transform="translate(680 780) scale(.33333)" stroke="#b01fb6" strokeWidth="3.500">
        <path d="M632 484h132l4 5-4 6H632l-4-6zM640 486v8M660 486v8M735 486v8M755 486v8M690 498v30M706 498v30M679 529h40v33h-40zM672 562h54v34h-54zM672 596l-4 66M726 596l6 66M657 663h83" />
        <path d="M686 489h24" strokeWidth="12" stroke="#d800e0" />
      </g>
      <ellipse cx="955" cy="997.500" rx="4" ry="5" stroke="#fff" strokeWidth="1.500" />
      <path d="M952 993l6 9" stroke="#fff" strokeWidth="1.300" />
      <text x="0" y="0" transform="translate(648 933) rotate(-90)" fill="#fff" stroke="#fff" strokeWidth=".7" fontSize="59" fontWeight="200" fontFamily="'DejaVu Sans Light','DejaVu Sans',sans-serif">2900</text>
      {/* navigation bar */}
      <g>
        <rect x="1093" y="258" width="24" height="114" rx="3" fill="#6a6a6a" fillOpacity=".75" />
        <rect x="1097" y="279" width="14" height="17" rx="4" fill="#a4a4a4" />
        <ellipse cx="1104" cy="287" rx="4" ry="6" stroke="#666" />
        <path d="M1096 314.500h20M1111 262l4 4M1115 262l-4 4" stroke="#444" />
        <rect x="1100" y="323" width="7" height="9" fill="#5a8c4e" />
        <circle cx="1108" cy="333" r="2.500" fill="#aaa" />
        <path d="M1111 365h4l-2 3z" fill="#ccc" />
      </g>
      <path d="M805 602v15l3.500-3.500 2.500 5.500 2-1-2.500-5.500h3z" fill="#fff" />
    </svg>
  );
}

function ViewIcon({ children }: Kids) {
  return (
    <button type="button" className="flex w-[21px] shrink-0 justify-center" aria-label="视图控制">
      <svg viewBox="0 0 16 16" className="h-4 w-4" fill="none" stroke="#4d5257" strokeWidth="1.200" aria-hidden="true">{children}</svg>
    </button>
  );
}

function View() {
  return (
    <main className="flex min-w-0 flex-1 flex-col border-t border-[#7a7a7a] bg-[#f0f0f0]">
      <div className="flex min-h-0 flex-1">
        <div className="relative min-w-0 flex-1 overflow-hidden bg-black">
          <Drawing />
          <div className="absolute top-1.5 right-0.5 flex items-end gap-1">
            <button type="button" aria-label="最小化视图" className="flex h-3 w-[9px] items-end pb-0.5"><span className="h-[3px] w-full bg-white" /></button>
            <button type="button" aria-label="还原视图">
              <svg viewBox="0 0 9 12" className="h-3 w-[9px]" fill="none" stroke="#fff" strokeWidth="1.500" aria-hidden="true"><path d="M3 3V1.500h5v7H6M1 4h5v6.500H1z" /></svg>
            </button>
            <button type="button" aria-label="关闭视图">
              <svg viewBox="0 0 9 12" className="h-3 w-[9px]" stroke="#fff" strokeWidth="2.500" aria-hidden="true"><path d="M1 2l7 8M8 2l-7 8" /></svg>
            </button>
          </div>
        </div>
        <VScroll w="w-[17px]" top="flex-[357]" thumb="h-[22px]" bottom="flex-[353]" />
      </div>
      <div className="flex h-6 shrink-0 items-center border-l border-[#8a8a8a]">
        <span className="w-[77px] pl-5 font-['Liberation_Serif',serif] text-[14px] whitespace-pre text-[#333]">1 : 100</span>
        <ViewIcon><path d="M1 1h14v12H1zM1 4h14M1 7h14M1 10h14M3 1v12M6 1v12M9 1v12M12 1v12" /></ViewIcon>
        <ViewIcon><path d="M1 6h9v9H1zM5 1h10v9H5zM1 6l4-5M10 6l5-5M10 15l5-5M1 11h9" /></ViewIcon>
        <ViewIcon><path d="M1 3h2M5 1l2 3M2 7h3" stroke="#aaa" /><path d="M8 7l6 7M14 7l-6 7" stroke="#888" strokeWidth="1.800" /></ViewIcon>
        <ViewIcon><path d="M1 9h3M0 14h6" stroke="#999" /><path d="M8 7l6 7M14 7l-6 7" stroke="#888" strokeWidth="1.800" /></ViewIcon>
        <ViewIcon><path d="M4 3h11v3H7v9H4zM0 11h4" fill="#4ba3d8" stroke="#235e8c" /><path d="M7 6h7v6H7z" fill="#e8eef2" /><path d="M9 10l3-2" stroke="#d02020" strokeWidth="2" /></ViewIcon>
        <ViewIcon><path d="M3 5h9v3H6v7H3zM0 12h4" fill="#4ba3d8" stroke="#235e8c" /><path d="M8 10l3-1" stroke="#d02020" strokeWidth="2" /><circle cx="12" cy="5" r="3.500" fill="#f6c443" stroke="#b8861a" /><path d="M12 9v6" /></ViewIcon>
        <ViewIcon><path d="M1 3l4 8M4 9c0 3 4 3 5 0M7 6l6-5c3 0 3 4 1 8" /><circle cx="11" cy="9" r="3" /></ViewIcon>
        <ViewIcon><circle cx="8" cy="6" r="3" fill="#e4f2ff" stroke="#2f7fd0" strokeWidth="1.800" /><path d="M6.500 10h3v4h-3z" fill="#777" /></ViewIcon>
        <ViewIcon><path d="M1 2h13v13H1zM4 2v3M8 2v3M11 2v3M4 9l-2 3 2 2" /><circle cx="10" cy="10" r="3" fill="#ccc" /></ViewIcon>
        <ViewIcon><path d="M1 6l4-5h9v9l-4 5H1zM1 6h9l4-5M10 6v9M4 3h8M5 6v9" fill="#aaa" /><path d="M2 11h6M4 8v6" stroke="#c02020" /><circle cx="13" cy="6" r="2.500" fill="#d9ecff" stroke="#2f7fd0" /></ViewIcon>
        <ViewIcon><path d="M1 1v5M15 1v5M1 3h14M1 8v7M3 13h5" strokeDasharray="3 1" /><path d="M9 10h6v5H9zM10 10V8h4v2" fill="#555" /></ViewIcon>
        <button type="button" aria-label="向左滚动" className="ml-1 flex"><Chevron dir="left" /></button>
        <div className="flex flex-1 px-2">
          <div className="flex-[271]" />
          <div className="h-5 w-4 bg-[#cdcdcd]" />
          <div className="flex-[273]" />
        </div>
        <button type="button" aria-label="向右滚动" className="mr-2 flex"><Chevron dir="right" /></button>
        <svg viewBox="0 0 10 12" className="mt-1 mr-0.5 h-3 w-2.5" fill="#b5b5b5" aria-hidden="true">
          <path d="M7 0h2v3H7zM7 4h2v3H7zM7 8h2v3H7zM4 4h2v3H4zM4 8h2v3H4zM0 8h2v3H0z" />
        </svg>
      </div>
    </main>
  );
}

/* ---------- project browser ---------- */

const sections = [19, 20, 21, 22, 23, 24, 25, 26, 27, 28, 29, 30, 31, 33, 34, 35, 36, 40, 95, 97, 99, 100, 101, 102, 103];
const leaves = [...sections.map((n) => `剖面: 剖面 ${n}`), '天花板投影平面: 消防泵房地面', '楼层平面: 消防泵房地面', '', '结构平面: 消防泵房地面'];

function Dash({ w }: { w: string }) {
  return <span className={`shrink-0 border-t border-dotted border-[#bbb] ${w}`} />;
}

function Toggle({ open }: { open: boolean }) {
  return (
    <button type="button" aria-label={open ? '折叠' : '展开'} className="relative flex h-3 w-[10px] shrink-0 items-center justify-center border border-[#999] bg-white">
      <span className="h-px w-1.5 bg-[#345]" />
      {open ? null : <span className="absolute h-2 w-px bg-[#345]" />}
    </button>
  );
}

function NodeIcon({ kind }: { kind: 'legend' | 'table' | 'sheet' }) {
  return (
    <svg viewBox="0 0 15 18" className="h-[18px] w-[15px] shrink-0" fill="none" stroke="#6b7076" aria-hidden="true">
      <path d="M.5 1.500h14v15H.5z" fill="#e9eaec" />
      {kind === 'sheet' ? <path d="M3 15V9l5-3v9zM9 4l5 4v7M2 4h6" /> : <path d="M.5 1.500h14V4H.5z" fill="#6b7076" />}
      {kind === 'legend' ? <path d="M3 7h3v2H3zM8 7h4M8 9h4M3 12h3v2H3zM8 12h4M8 14h4" /> : null}
      {kind === 'table' ? <path d="M5 4v12M10 4v12M1 8h13M1 12h13" stroke="#b9bcc0" /> : null}
    </svg>
  );
}

function ImeBar() {
  const b = 'flex h-full w-[22px] items-center justify-center';
  const s = 'h-[18px] w-[18px]';
  return (
    <div role="toolbar" aria-label="输入法" className="absolute right-3 bottom-[141px] flex h-[34px] w-[206px] items-center border border-[#b9cdea] bg-white pr-1 text-[#2b6fd8]">
      <button type="button" className="mr-1 -ml-0.5 flex h-8 w-[25px] -translate-y-0.5 items-center justify-center rounded-xl bg-[#3577ee] text-[18px] leading-8 font-bold text-white">王</button>
      <button type="button" className={`${b} text-[15px] font-bold`}>中</button>
      <button type="button" className={b} aria-label="标点">
        <svg viewBox="0 0 18 18" className={s} fill="none" stroke="currentColor" strokeWidth="2" aria-hidden="true"><circle cx="5" cy="5" r="2" /><path d="M12 11h2v2l-2 3" strokeWidth="3" /></svg>
      </button>
      <button type="button" className={b} aria-label="表情">
        <svg viewBox="0 0 18 18" className={s} fill="none" stroke="currentColor" strokeWidth="1.800" aria-hidden="true"><circle cx="9" cy="9" r="7" /><path d="M6.500 6v2M11.500 6v2M5.500 10.500c1 3.500 6 3.500 7 0" /></svg>
      </button>
      <button type="button" className={`${b} relative`} aria-label="截图">
        <svg viewBox="0 0 18 18" className={s} fill="none" stroke="currentColor" strokeWidth="2" aria-hidden="true"><path d="M3 2l10 11M15 2L5 13" /><circle cx="4" cy="14" r="2" /><circle cx="14" cy="14" r="2" /></svg>
        <span className="absolute top-px right-0 h-2 w-2 rounded-full bg-[#e23b2e]" />
      </button>
      <button type="button" className={b} aria-label="软键盘">
        <svg viewBox="0 0 18 18" className={s} fill="none" stroke="currentColor" strokeWidth="1.800" aria-hidden="true"><rect x="2" y="2" width="14" height="14" rx="1.500" /><path d="M4 6h10M4 9.500h10" strokeDasharray="2 1" /><path d="M5 13h8" /></svg>
      </button>
      <button type="button" className={`${b} text-[#b9cbee]`} aria-label="用户">
        <svg viewBox="0 0 18 18" className={s} fill="currentColor" aria-hidden="true"><circle cx="9" cy="5" r="3" /><path d="M4 17v-3c0-5 10-5 10 0v3z" /></svg>
      </button>
      <button type="button" className={b} aria-label="皮肤">
        <svg viewBox="0 0 18 18" className={s} fill="currentColor" aria-hidden="true"><path d="M6 1c1 2.500 5 2.500 6 0l5 3-1.500 5L14 8v9H4V8l-1.500 1L1 4z" /></svg>
      </button>
      <button type="button" className={b} aria-label="设置">
        <svg viewBox="0 0 18 18" className={s} fill="none" stroke="currentColor" strokeWidth="3" aria-hidden="true"><path d="M9 3l4.500 3v6L9 15l-4.500-3V6z" /><path d="M9 1v2M9 15v2M2 5l2 1M14 12l2 1M16 5l-2 1M4 12l-2 1" strokeWidth="2.500" /></svg>
      </button>
    </div>
  );
}

function Browser() {
  return (
    <aside className="relative flex w-[300px] shrink-0 flex-col bg-[#f0f0f0] text-[12px]">
      <PaletteTitle text="项目浏览器 - 信联天地-B1_3#地下室—泵房.rvt" />
      <div className="mt-[3px] flex min-h-0 flex-1 border-t-2 border-l-2 border-[#777]">
        <ul className="min-h-0 flex-1 overflow-hidden bg-white pt-px whitespace-nowrap text-[#222]">
          {leaves.map((t, i) => (
            <li key={i} className="flex h-[22px] items-center pl-[7px]">
              <span className="h-[22px] w-[58px] shrink-0 border-l border-dotted border-[#aaa]" />
              <span className={`w-px shrink-0 border-l border-dotted border-[#aaa] ${i === leaves.length - 1 ? 'mb-[11px] h-[11px]' : 'h-[22px]'}`} />
              <Dash w="w-[13px]" />
              {t ? <a href="#view" className={`ml-0.5 ${t.endsWith(' 100') ? 'bg-[#e8e8e8] font-bold' : ''}`}>{t}</a> : null}
            </li>
          ))}
          <li className="flex h-[22px] items-center pl-[7px]"><span className="h-[22px] shrink-0 border-l border-dotted border-[#aaa]" /><Dash w="w-[10px]" /><NodeIcon kind="legend" /><a href="#legend" className="ml-[5px]">图例</a></li>
          <li className="flex h-[22px] items-center pl-0.5"><Toggle open /><Dash w="w-[6px]" /><NodeIcon kind="table" /><a href="#schedules" className="ml-[5px]">明细表/数量</a></li>
          <li className="flex h-[22px] items-center pl-[7px]"><span className="h-[22px] w-5 shrink-0 border-l border-dotted border-[#aaa]" /><span className="mb-[11px] h-[11px] border-l border-dotted border-[#aaa]" /><Dash w="w-[13px]" /><a href="#pipes" className="ml-px">管道明细表</a></li>
          <li className="flex h-[22px] items-center pl-0.5"><Toggle open /><Dash w="w-[6px]" /><NodeIcon kind="sheet" /><a href="#sheets" className="ml-[5px]">图纸 (全部)</a></li>
          <li className="flex h-[22px] items-center pl-[7px]"><span className="h-[22px] w-[14px] shrink-0 border-l border-dotted border-[#aaa]" /><Toggle open={false} /><Dash w="w-[9px]" /><a href="#sheet-006" className="ml-0.5">006 - 未命名</a></li>
        </ul>
        <VScroll w="w-[15px]" top="flex-[233]" thumb="h-[99px]" bottom="flex-[373]" />
      </div>
      <div className="flex h-[22px] shrink-0 items-center border-l-2 border-[#777] pl-px">
        <button type="button" aria-label="向左滚动" className="flex"><Chevron dir="left" /></button>
        <div className="ml-1 h-5 flex-1 bg-[#cdcdcd]" />
        <button type="button" aria-label="向右滚动" className="mr-[18px] ml-2.5 flex"><Chevron dir="right" /></button>
      </div>
      <ImeBar />
    </aside>
  );
}

/* ---------- status bar ---------- */

function StatusSelect({ label, text }: { label: string; text: string }) {
  return (
    <div className="relative shrink-0">
      <select aria-label={label} className="block h-[23px] w-[190px] appearance-none border border-[#e4e4e4] bg-white pl-px text-[12px] text-[#666]">
        <option>{text}</option>
      </select>
      <svg viewBox="0 0 8 6" className="absolute top-2 right-0.5 h-1.5 w-2" fill="none" stroke="#aaa" aria-hidden="true"><path d="M.5 1L4 5l3.500-4" /></svg>
    </div>
  );
}

function StatusIcon({ label, w, children }: Kids & { label: string; w: string }) {
  return (
    <button type="button" aria-label={label} className={`flex shrink-0 justify-center ${w}`}>
      <svg viewBox="0 0 16 20" className="h-5 w-4" fill="none" stroke="#5b6066" strokeWidth="1.200" aria-hidden="true">{children}</svg>
    </button>
  );
}

const pointer = <path d="M8 8v10l2.500-2.500L12 19l1.500-.8L12 15h3z" fill="#fff" stroke="#333" />;
const redX = <path d="M9 2l6 6M15 2L9 8" stroke="#d51f2b" strokeWidth="2.500" />;

function StatusBar() {
  return (
    <footer className="flex h-[31px] shrink-0 items-center border-t-2 border-b border-t-[#9a9a9a] border-b-[#2c3f47] bg-[#d4d4d4]">
      <p className="w-[564px] shrink-0 overflow-hidden text-[11px] whitespace-nowrap text-[#222]">
        单击可进行选择; 按 Tab 键并单击可选择其他项目; 按 Ctrl 键并单击可将新项目添加到选择集; 按 Shift 键并单击可
      </p>
      <StatusIcon label="工作集" w="w-[24px]">
        <path d="M2 8h4v10H2zM9 7h4v11H9zM7 2l3 2v4L7 7zM4 5l3 3" fill="#aaa" stroke="#8a8a8a" />
      </StatusIcon>
      <StatusSelect label="活动工作集" text="" />
      <StatusIcon label="可编辑项" w="w-[27px]">
        <path d="M6 2h8v4H6z" fill="#e6e6e6" stroke="#999" />
        <path d="M9 6l-3 5M2 19l1-6 5-2v8z" fill="#999" stroke="#999" />
      </StatusIcon>
      <span className="w-[25px] shrink-0 text-[12px] text-[#333]">:0</span>
      <StatusIcon label="设计选项" w="w-[20px]">
        <path d="M1 2h14v16H1z" fill="#fff" stroke="#333" />
        <path d="M1 3h14v2H1zM3 8h3M8 8h5M5 11h2M8 11h5M5 14h2M8 14h5" stroke="#333" strokeWidth="1.800" />
      </StatusIcon>
      <StatusIcon label="添加到集" w="w-[24px]">
        <path d="M2 2h12v15H2z" fill="#a8a8a8" stroke="#999" />
        <path d="M1 13h5V9l5 5-5 4v-3H1z" fill="#ddd" stroke="#bbb" />
      </StatusIcon>
      <StatusSelect label="主模型" text="主模型" />
      <div className="flex-1" />
      <StatusIcon label="选择链接" w="w-[22px]">
        <path d="M2 3h5v5H2zM9 3h5v5H9zM5 5h6" stroke="#d8a51c" strokeWidth="2.500" />{pointer}
      </StatusIcon>
      <StatusIcon label="选择基线图元" w="w-[22px]">
        <path d="M1 12L8 4v8zM1 15h8" stroke="#2b87b5" />{redX}{pointer}
      </StatusIcon>
      <StatusIcon label="选择锁定图元" w="w-[22px]">
        <path d="M2 3h7v5H2zM1 9h9v3H1zM5 12v6" fill="#e58a4e" stroke="#b3521c" />{redX}{pointer}
      </StatusIcon>
      <StatusIcon label="按面选择图元" w="w-[22px]">
        <path d="M2 5l6-3v13l-6 3z" fill="#a9def2" stroke="#2b87b5" />{redX}{pointer}
      </StatusIcon>
      <StatusIcon label="选择时拖曳图元" w="w-[23px]">
        <path d="M0 6h12M6 0v12M4 3l2-2 2 2M2 4L0 6l2 2" stroke="#333" />{pointer}
      </StatusIcon>
      <StatusIcon label="后台进程" w="w-[22px]">
        <circle cx="8" cy="10" r="5.500" stroke="#9d9d9d" strokeWidth="3" strokeDasharray="3 1" />
      </StatusIcon>
      <StatusIcon label="过滤器" w="w-[20px]">
        <path d="M1 3h14l-5.500 8v7L7 16v-5z" fill="#e8eaec" stroke="#4a4f55" strokeWidth="1.500" />
      </StatusIcon>
      <span className="mr-[52px] shrink-0 text-[12px] text-[#333]">:0</span>
    </footer>
  );
}

export default function App() {
  return (
    <div className={`flex h-screen flex-col overflow-hidden bg-black py-6 text-[#222] ${FONT}`}>
      <header className="shrink-0">
        <TitleBar />
        <Tabs />
        <Ribbon />
        <div className="h-[31px] bg-[#f6f6f6]" />
      </header>
      <div className="flex min-h-0 flex-1 gap-1 bg-[#f0f0f0]">
        <Properties />
        <View />
        <Browser />
      </div>
      <StatusBar />
    </div>
  );
}
